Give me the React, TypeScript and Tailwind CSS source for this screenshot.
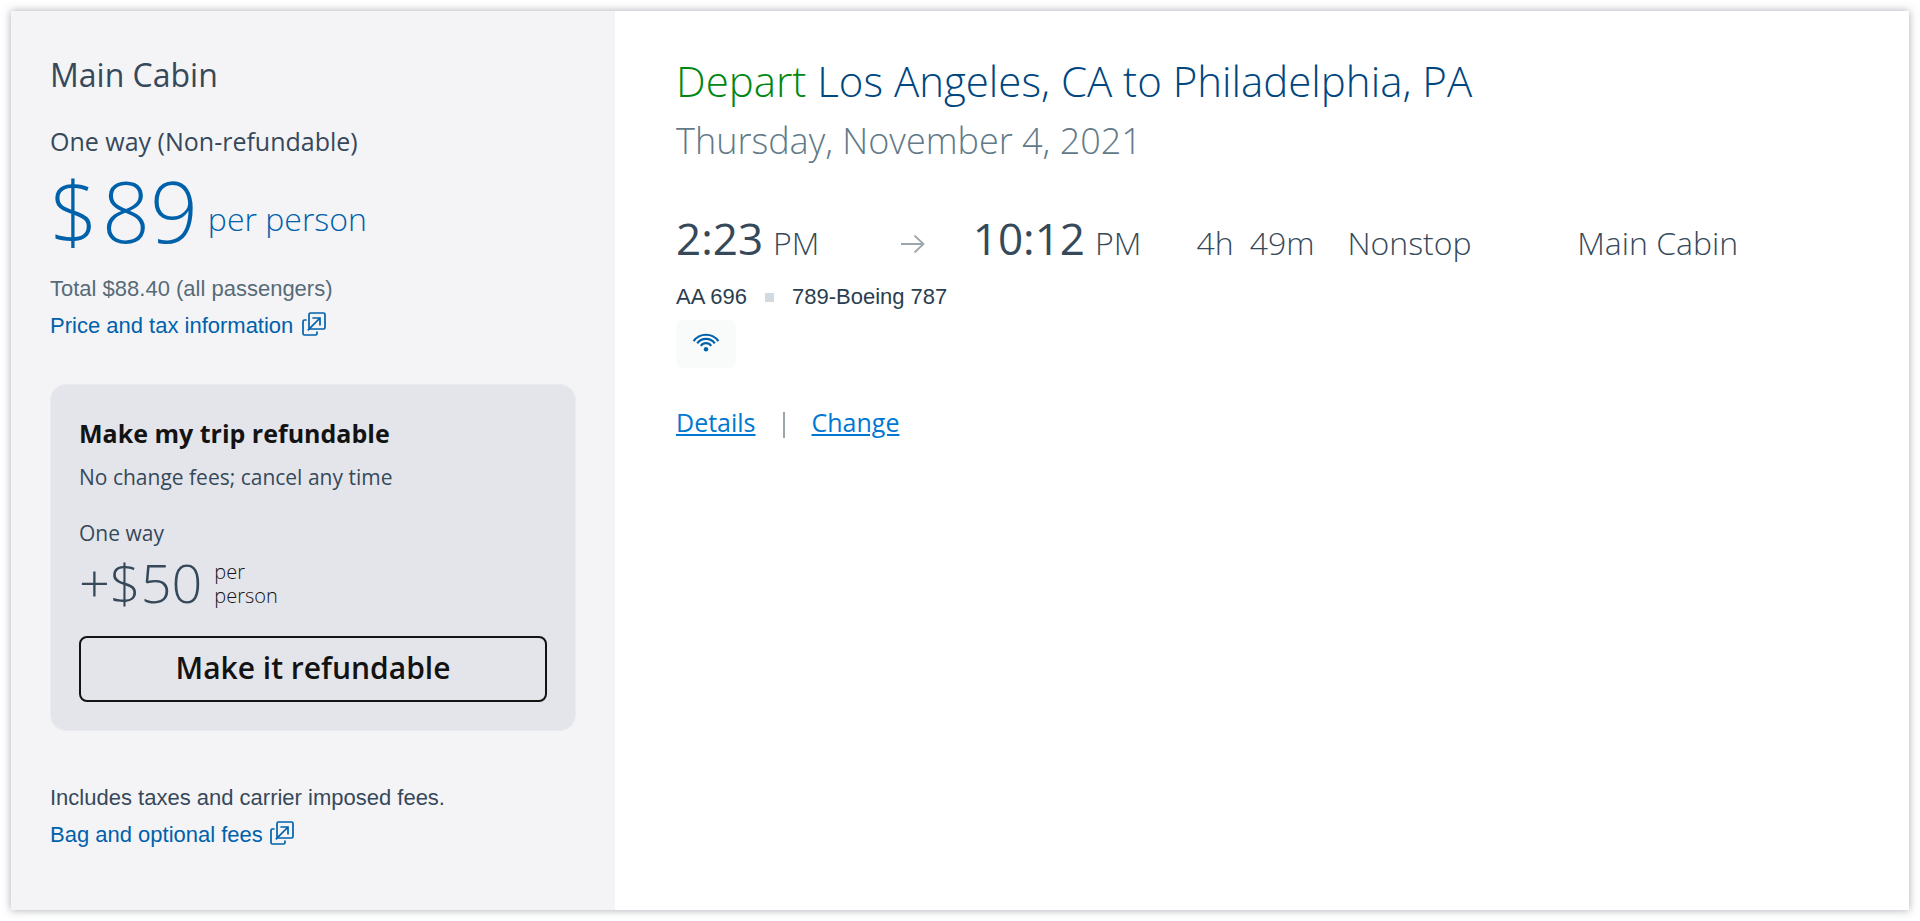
import React from "react";

const SANS = "font-['Open_Sans','Noto_Sans',sans-serif]";
const ARIAL = "font-['Liberation_Sans',Arial,sans-serif]";

function PopupIcon() {
  return (
    <svg className="mb-1" width="24" height="24" viewBox="0 0 24 24" fill="none" stroke="currentColor" strokeWidth="1.7" strokeLinejoin="round" aria-hidden="true">
      <rect x="7" y="1" width="16" height="16" rx="1.5" />
      <path d="M4.6 8H2.5A1.5 1.5 0 0 0 1 9.5V21.5A1.5 1.5 0 0 0 2.5 23H13.5A1.5 1.5 0 0 0 15 21.5V19.4" />
      <path d="M5.8 18.4L18 6M10.4 6H18V13.6" strokeLinejoin="miter" />
    </svg>
  );
}

function WifiIcon() {
  return (
    <svg className="mb-1" width="28" height="20" viewBox="0 0 28 20" fill="none" stroke="currentColor" strokeWidth="2.1" aria-hidden="true">
      <path d="M1.6 9.2A15.2 15.2 0 0 1 26.4 9.2" />
      <path d="M5.2 11.4A10.8 10.8 0 0 1 22.8 11.4" />
      <path d="M8.8 13.8A6.4 6.4 0 0 1 19.2 13.8" />
      <circle cx="14" cy="17.2" r="2.2" fill="currentColor" stroke="none" />
    </svg>
  );
}

function ArrowIcon() {
  return (
    <svg width="24" height="20" viewBox="0 0 24 20" fill="none" stroke="#9da6ab" strokeWidth="1.8" role="img" aria-label="to">
      <path d="M0 9H22.5M13.5 0.5L22.5 9L13.5 17.5" />
    </svg>
  );
}

function Time({ value, period }: { value: string; period: string }) {
  return (
    <p className="flex items-baseline gap-2.5 whitespace-nowrap">
      <span className="text-[44px] leading-[64px] font-normal">{value}</span>
      <span className="text-[32px]">{period}</span>
    </p>
  );
}

function FareSummary() {
  return (
    <aside className="w-[604px] shrink-0 bg-[#f4f4f7] px-[39px] pt-11 pb-[57px] text-[#36495a]">
      <h2 className="text-[32px] leading-10">Main Cabin</h2>
      <p className="mt-[30px] text-[25px] leading-8">One way (Non-refundable)</p>
      <p className="mt-1.5 flex items-end gap-2.5 font-light text-[#0061ab]">
        <span className="flex gap-1 text-[84px] leading-[96px]">
          <span>$</span>
          <span>89</span>
        </span>
        <span className="pb-5 text-[32px] leading-10">per person</span>
      </p>
      <div className={`${ARIAL} mt-[11px] text-[22px] leading-[37px]`}>
        <p className="text-[#566b78]">Total $88.40 (all passengers)</p>
        <a href="#price" className="flex items-center gap-[9px] text-[#0061ab]">
          Price and tax information
          <PopupIcon />
        </a>
      </div>

      <section className="mt-10 rounded-2xl border border-[#e9ecef] bg-[#e4e5eb] px-7 pt-8 pb-7">
        <h3 className="text-[25px] leading-8 font-bold text-[#131313]">Make my trip refundable</h3>
        <p className="mt-3.5 text-[21px] leading-7">No change fees; cancel any time</p>
        <p className="mt-7 text-[21px] leading-7">One way</p>
        <div className="mt-[3px] flex items-end gap-3">
          <span className="text-[54px] leading-[64px] font-light">+$50</span>
          <span className="pb-1.5 text-xl leading-6 font-light text-[#131313]">
            per
            <br />
            person
          </span>
        </div>
        <button type="button" className="mt-[22px] h-[66px] w-full rounded-lg border-2 border-[#131313] pb-1 text-[30px] font-semibold text-[#131313]">
          Make it refundable
        </button>
      </section>

      <div className={`${ARIAL} mt-12 text-[22px] leading-[37px]`}>
        <p>Includes taxes and carrier imposed fees.</p>
        <a href="#bags" className="flex items-center gap-[7px] text-[#0061ab]">
          Bag and optional fees
          <PopupIcon />
        </a>
      </div>
    </aside>
  );
}

function FlightDetails() {
  return (
    <section className="min-w-0 grow pt-[41px] pr-9 pl-[61px] text-[#36495a]">
      <h1 className="text-[42px] leading-[58px] font-light text-[#00467f]">
        <span className="text-[#008712]">Depart</span> Los Angeles, CA to Philadelphia, PA
      </h1>
      <p className="mt-1.5 text-[36px] leading-[50px] font-light text-[#627a88]">Thursday, November 4, 2021</p>

      <div className="mt-10 grid grid-cols-[225fr_72fr_224fr_151fr_230fr_296fr] items-baseline text-[32px] font-light whitespace-nowrap">
        <Time value="2:23" period="PM" />
        <ArrowIcon />
        <Time value="10:12" period="PM" />
        <p className="flex gap-4">
          <span>4h</span>
          <span>49m</span>
        </p>
        <p>Nonstop</p>
        <p>Main Cabin</p>
      </div>

      <p className={`${ARIAL} mt-3 flex items-center gap-[18px] text-[22px] leading-[30px] text-[#2b3e4f]`}>
        AA 696
        <span className="size-[9px] bg-[#d0dae0]" />
        789-Boeing 787
      </p>
      <button type="button" aria-label="Wi-Fi available" className="mt-2 flex h-12 w-[60px] items-center justify-center rounded-md bg-[#f9fbfb] text-[#0061ab]">
        <WifiIcon />
      </button>
      <nav className="mt-[38px] flex items-center gap-[27px] text-[25px] leading-8 text-[#0078d2]">
        <a href="#details" className="underline underline-offset-2">Details</a>
        <span className="mt-1.5 h-[26px] w-0.5 bg-[#9da6ab]" />
        <a href="#change" className="underline underline-offset-2">Change</a>
      </nav>
    </section>
  );
}

export default function App() {
  return (
    <div className={`${SANS} bg-white px-[11px] pt-[11px] pb-2.5`}>
      <main className="flex bg-white shadow-[0_0_8px_0_rgba(80,90,105,0.5)]">
        <FareSummary />
        <FlightDetails />
      </main>
    </div>
  );
}
